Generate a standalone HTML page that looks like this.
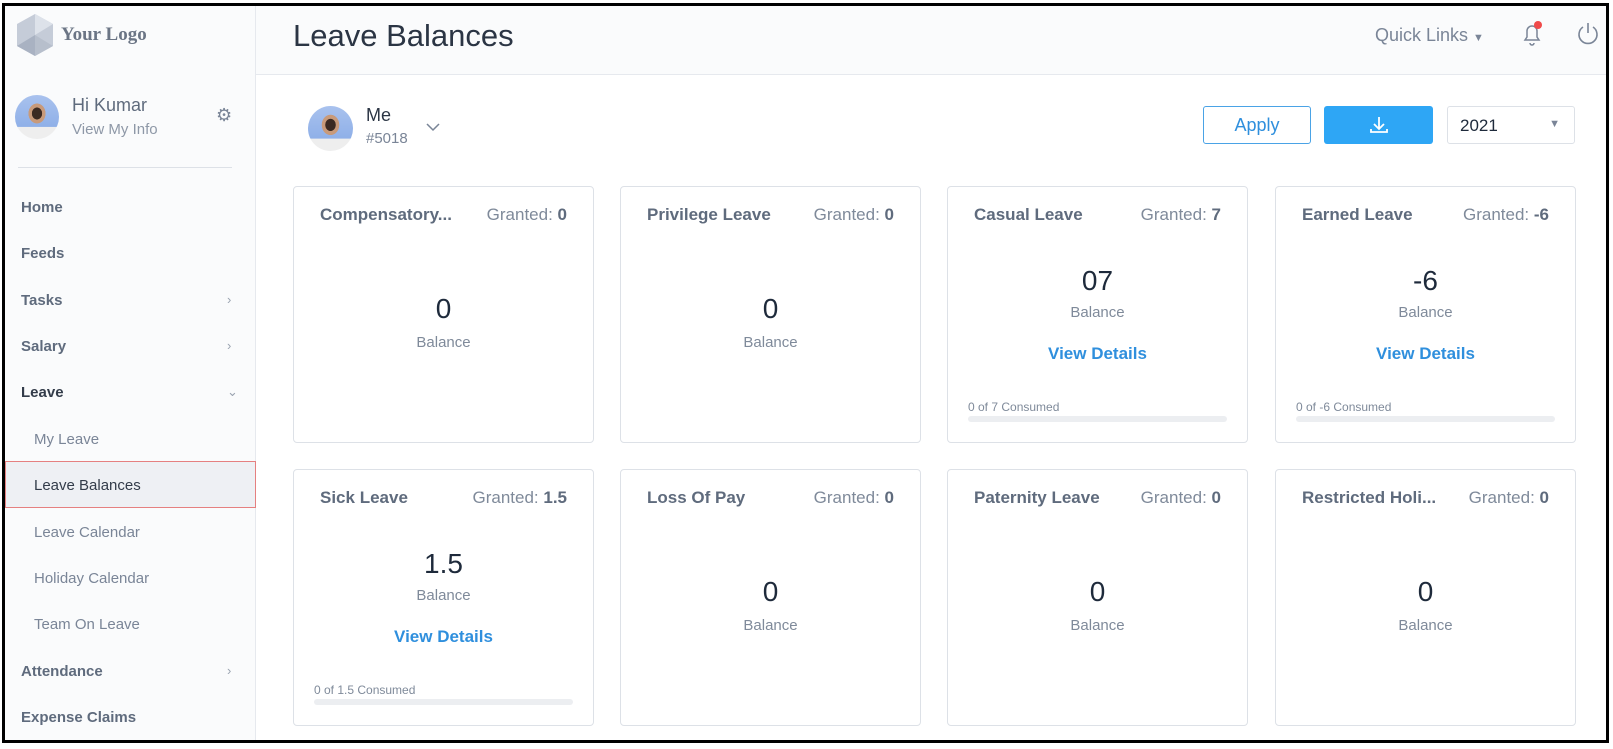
<!DOCTYPE html>
<html><head><meta charset="utf-8"><style>
*{box-sizing:border-box;margin:0;padding:0}
body{width:1613px;height:749px;background:#fff;font-family:"Liberation Sans",sans-serif;position:relative;overflow:hidden}
.frame{position:absolute;left:2px;top:3px;width:1607px;height:740px;border:3px solid #000;background:#fafbfc;overflow:hidden}
.abs{position:absolute}
.side{left:0;top:0;width:251px;height:100%;background:#fafbfc;border-right:1px solid #e6e9ee}
.nav{position:absolute;left:16px;font-size:15px;color:#5f6b7d;font-weight:bold}
.sub{position:absolute;left:29px;font-size:15px;color:#7a8597}
.chev{position:absolute;left:222px;color:#9aa3b0;font-size:13px}
.main{left:251px;top:68px;right:0;bottom:0;background:#fff;border-top:1px solid #e6e9ee}
.card{position:absolute;width:301px;height:257px;border:1px solid #dde1e7;border-radius:4px;background:#fff}
.t{position:absolute;left:26px;top:18px;font-size:17px;color:#5f6b7d;font-weight:bold}
.g{position:absolute;right:26px;top:18px;font-size:17px;color:#7f8a9a}
.g b{color:#5f6b7d}
.n{position:absolute;left:0;width:100%;text-align:center;font-size:28px;color:#1e2a3b}
.bl{position:absolute;left:0;width:100%;text-align:center;font-size:15px;color:#7f8a9a}
.vd{position:absolute;left:0;width:100%;text-align:center;font-size:17px;color:#2f8fdd;font-weight:bold}
.cs{position:absolute;left:20px;top:213px;font-size:12px;color:#7f8a9a}
.bar{position:absolute;left:20px;right:20px;top:229px;height:6px;border-radius:3px;background:#eceef1}
.av{position:absolute;border-radius:50%;background:radial-gradient(ellipse at 50% 42%,#3b2a22 0 16%,#c89a7a 17% 27%,transparent 28%),linear-gradient(#a9c2ee,#8fb0e8 72%,#eee 73%)}
</style></head><body>
<div class="frame">
 <div class="abs side">
  <svg class="abs" style="left:10px;top:7px" width="40" height="44" viewBox="0 0 40 44"><polygon points="20,1 38,11 38,33 20,43 2,33 2,11" fill="#c5ccd8"/><polygon points="20,1 38,11 20,22" fill="#dde2ea"/><polygon points="2,33 20,22 20,43" fill="#a9b2c2"/><polygon points="38,33 20,22 20,43" fill="#b7bfcc"/></svg>
  <div class="abs" style="left:56px;top:18px;font-family:'Liberation Serif',serif;font-weight:bold;font-size:19px;color:#6b7585">Your Logo</div>
  <div class="av" style="left:10px;top:89px;width:44px;height:44px"></div>
  <div class="abs" style="left:67px;top:89px;font-size:18px;color:#5f6b7d">Hi Kumar</div>
  <div class="abs" style="left:67px;top:115px;font-size:15px;color:#8e98a7">View My Info</div>
  <div class="abs" style="left:211px;top:99px;font-size:18px;color:#7a8597">⚙</div>
  <div class="abs" style="left:13px;top:161px;width:214px;height:1px;background:#dde1e7"></div>
  <div class="nav" style="top:193px">Home</div>
  <div class="nav" style="top:239px">Feeds</div>
  <div class="nav" style="top:286px">Tasks</div><div class="chev" style="top:286px">›</div>
  <div class="nav" style="top:332px">Salary</div><div class="chev" style="top:332px">›</div>
  <div class="nav" style="top:378px;color:#333c4a">Leave</div><div class="chev" style="top:378px">⌄</div>
  <div class="sub" style="top:425px">My Leave</div>
  <div class="abs" style="left:0;top:455px;width:251px;height:47px;background:#eef0f4;border:1px solid #e58080"></div>
  <div class="sub" style="top:471px;color:#333c4a">Leave Balances</div>
  <div class="sub" style="top:518px">Leave Calendar</div>
  <div class="sub" style="top:564px">Holiday Calendar</div>
  <div class="sub" style="top:610px">Team On Leave</div>
  <div class="nav" style="top:657px">Attendance</div><div class="chev" style="top:657px">›</div>
  <div class="nav" style="top:703px">Expense Claims</div>
 </div>
 <div class="abs" style="left:288px;top:12px;font-size:31px;color:#2b3544">Leave Balances</div>
 <div class="abs" style="left:1370px;top:19px;font-size:18px;color:#7a8597">Quick Links <span style="font-size:11px">▼</span></div>
 <svg class="abs" style="left:1515px;top:14px" width="26" height="28" viewBox="0 0 26 28"><path d="M5 20h14l-2-3v-6a5 5 0 0 0-10 0v6z M10 23a2 2 0 0 0 4 0" fill="none" stroke="#7a8597" stroke-width="1.5"/><circle cx="18" cy="5" r="4" fill="#f04a4a"/></svg>
 <svg class="abs" style="left:1570px;top:15px" width="26" height="26" viewBox="0 0 26 26"><path d="M8 6a9 9 0 1 0 10 0 M13 2v10" fill="none" stroke="#7a8597" stroke-width="1.6"/></svg>
 <div class="abs main">
  <div class="av" style="left:52px;top:31px;width:45px;height:45px"></div>
  <div class="abs" style="left:110px;top:30px;font-size:18px;color:#2b3544">Me</div>
  <div class="abs" style="left:110px;top:55px;font-size:15px;color:#7a8597">#5018</div>
  <svg class="abs" style="left:170px;top:47px" width="14" height="10"><path d="M1 2l6 6 6-6" fill="none" stroke="#7a8597" stroke-width="1.5"/></svg>
  <div class="abs" style="left:947px;top:31px;width:108px;height:38px;border:1px solid #4aa3e6;border-radius:3px;color:#2f8fdd;font-size:18px;text-align:center;line-height:36px">Apply</div>
  <div class="abs" style="left:1068px;top:31px;width:109px;height:38px;border-radius:3px;background:#2ea6f5"><svg style="position:absolute;left:44px;top:8px" width="22" height="22" viewBox="0 0 22 22"><path d="M11 3v11M6 10l5 5 5-5M3 15v3h16v-3" fill="none" stroke="#fff" stroke-width="1.8"/></svg></div>
  <div class="abs" style="left:1191px;top:31px;width:128px;height:38px;border:1px solid #dde1e7;border-radius:3px;font-size:17px;color:#1e2a3b;padding:9px 0 0 12px">2021<span style="position:absolute;right:14px;top:11px;font-size:11px;color:#7a8597">▼</span></div>

  <div class="card" style="left:37px;top:111px"><div class="t">Compensatory...</div><div class="g">Granted: <b>0</b></div><div class="n" style="top:106px">0</div><div class="bl" style="top:147px">Balance</div></div>
  <div class="card" style="left:364px;top:111px"><div class="t">Privilege Leave</div><div class="g">Granted: <b>0</b></div><div class="n" style="top:106px">0</div><div class="bl" style="top:147px">Balance</div></div>
  <div class="card" style="left:691px;top:111px"><div class="t">Casual Leave</div><div class="g">Granted: <b>7</b></div><div class="n" style="top:78px">07</div><div class="bl" style="top:117px">Balance</div><div class="vd" style="top:157px">View Details</div><div class="cs">0 of 7 Consumed</div><div class="bar"></div></div>
  <div class="card" style="left:1019px;top:111px"><div class="t">Earned Leave</div><div class="g">Granted: <b>-6</b></div><div class="n" style="top:78px">-6</div><div class="bl" style="top:117px">Balance</div><div class="vd" style="top:157px">View Details</div><div class="cs">0 of -6 Consumed</div><div class="bar"></div></div>

  <div class="card" style="left:37px;top:394px"><div class="t">Sick Leave</div><div class="g">Granted: <b>1.5</b></div><div class="n" style="top:78px">1.5</div><div class="bl" style="top:117px">Balance</div><div class="vd" style="top:157px">View Details</div><div class="cs">0 of 1.5 Consumed</div><div class="bar"></div></div>
  <div class="card" style="left:364px;top:394px"><div class="t">Loss Of Pay</div><div class="g">Granted: <b>0</b></div><div class="n" style="top:106px">0</div><div class="bl" style="top:147px">Balance</div></div>
  <div class="card" style="left:691px;top:394px"><div class="t">Paternity Leave</div><div class="g">Granted: <b>0</b></div><div class="n" style="top:106px">0</div><div class="bl" style="top:147px">Balance</div></div>
  <div class="card" style="left:1019px;top:394px"><div class="t">Restricted Holi...</div><div class="g">Granted: <b>0</b></div><div class="n" style="top:106px">0</div><div class="bl" style="top:147px">Balance</div></div>
 </div>
</div>
</body></html>
